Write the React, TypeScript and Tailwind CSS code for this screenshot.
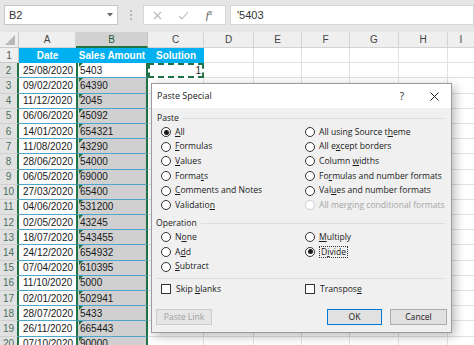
import React from "react";
import clsx from "clsx";

const data: [string, string][] = [
  ["25/08/2020", "5403"],
  ["09/02/2020", "64390"],
  ["11/12/2020", "2045"],
  ["06/06/2020", "45092"],
  ["14/01/2020", "654321"],
  ["11/08/2020", "43290"],
  ["28/06/2020", "54000"],
  ["06/05/2020", "69000"],
  ["27/03/2020", "65400"],
  ["04/06/2020", "531200"],
  ["02/05/2020", "43245"],
  ["18/07/2020", "543455"],
  ["24/12/2020", "654932"],
  ["07/04/2020", "610395"],
  ["11/10/2020", "5000"],
  ["02/01/2020", "502941"],
  ["28/07/2020", "5433"],
  ["26/11/2020", "665443"],
  ["07/10/2020", "90000"],
];

// columns D..I, plain gridline cells
function Blank() {
  return (
    <>
      <div className="w-[50px] shrink-0 border-r border-b border-[#e1e1e1]" />
      <div className="w-[48px] shrink-0 border-r border-b border-[#e1e1e1]" />
      <div className="w-[48px] shrink-0 border-r border-b border-[#e1e1e1]" />
      <div className="w-[49px] shrink-0 border-r border-b border-[#e1e1e1]" />
      <div className="w-[49px] shrink-0 border-r border-b border-[#e1e1e1]" />
      <div className="flex-1 border-b border-[#e1e1e1]" />
    </>
  );
}

function TextMark() {
  return (
    <svg className="absolute left-[1px] top-0" width="4" height="4" viewBox="0 0 4 4">
      <polygon points="0,0 4,0 0,4" fill="#1e7145" />
    </svg>
  );
}

function DataRow({ n, date, amount }: { n: number; date: string; amount: string }) {
  return (
    <div className="flex h-[15.2px]">
      <div className="w-[19px] shrink-0 flex items-center justify-center bg-[#e1e1e1] text-[#4a6f5b] border-r-2 border-r-[#217346] border-b border-b-[#d0d0d0]">
        {n}
      </div>
      <div className="w-[57px] shrink-0 bg-white border-b border-b-[#4ea6cf] pl-[4px] flex items-center">
        {date}
      </div>
      <div
        className={clsx(
          "w-[72px] shrink-0 relative border-x-2 border-x-[#217346] border-b border-b-[#4ea6cf] pl-[2px] flex items-center",
          n === 2 ? "bg-white" : "bg-[#d0d0d0]"
        )}
      >
        <TextMark />
        {amount}
      </div>
      {n === 2 ? (
        <div className="w-[56px] shrink-0 outline-2 outline-dashed outline-[#217346] -outline-offset-2 flex items-center justify-end pr-[3px]">
          1
        </div>
      ) : (
        <div className="w-[56px] shrink-0 border-r border-b border-[#e1e1e1]" />
      )}
      <Blank />
    </div>
  );
}

function Acc({ t, k }: { t: string; k?: number }) {
  if (k === undefined) return <span>{t}</span>;
  return (
    <span>
      {t.slice(0, k)}
      <u className="underline-offset-[1px]">{t[k]}</u>
      {t.slice(k + 1)}
    </span>
  );
}

function Radio({ label, k, on, off, focus }: { label: string; k?: number; on?: boolean; off?: boolean; focus?: boolean }) {
  return (
    <div className={clsx("h-[14.6px] flex items-center gap-[4px]", off && "text-[#a6a6a6]")}>
      <span
        className={clsx(
          "w-[10px] h-[10px] rounded-full border bg-white flex items-center justify-center shrink-0",
          off ? "border-[#cfcfcf]" : "border-[#333]"
        )}
      >
        {on && <span className="w-[5px] h-[5px] rounded-full bg-[#1a1a1a]" />}
      </span>
      <span className={clsx(focus && "border border-dotted border-[#333] px-[1px] leading-[10px]")}>
        <Acc t={label} k={k} />
      </span>
    </div>
  );
}

function Check({ label, k }: { label: string; k: number }) {
  return (
    <div className="h-[14px] flex items-center gap-[5px]">
      <span className="w-[10px] h-[10px] border border-[#333] bg-white shrink-0" />
      <Acc t={label} k={k} />
    </div>
  );
}

function PasteSpecial() {
  return (
    <div className="absolute left-[151px] top-[83px] w-[301px] h-[250px] bg-[#f0f0f0] border border-[#9b9b9b] shadow-[3px_3px_10px_rgba(0,0,0,0.28)] font-['Open_Sans',sans-serif] text-[8.6px] text-[#1a1a1a]">
      <div className="h-[24px] bg-white flex items-center pl-[5px] text-[9px]">
        Paste Special
        <span className="ml-auto w-[30px] text-center text-[10px]">?</span>
        <span className="w-[34px] flex justify-center">
          <svg width="9" height="9" viewBox="0 0 9 9">
            <path d="M0.5 0.5 L8.5 8.5 M8.5 0.5 L0.5 8.5" stroke="#222" strokeWidth="1" />
          </svg>
        </span>
      </div>

      <div className="px-[4px]">
        <div className="mt-[3px] h-[14px] flex items-center gap-[4px] pl-[1px] pr-[2px]">
          <span>Paste</span>
          <div className="flex-1 h-px bg-[#dcdcdc]" />
        </div>
        <div className="grid grid-cols-[144px_1fr] pl-[5px]">
          <Radio label="All" k={0} on />
          <Radio label="All using Source theme" k={18} />
          <Radio label="Formulas" k={0} />
          <Radio label="All except borders" k={5} />
          <Radio label="Values" k={0} />
          <Radio label="Column widths" k={7} />
          <Radio label="Formats" k={5} />
          <Radio label="Formulas and number formats" k={2} />
          <Radio label="Comments and Notes" k={0} />
          <Radio label="Values and number formats" k={3} />
          <Radio label="Validation" k={9} />
          <Radio label="All merging conditional formats" off />
        </div>

        <div className="mt-[3.5px] h-[14px] flex items-center gap-[4px] pr-[2px]">
          <span>Operation</span>
          <div className="flex-1 h-px bg-[#dcdcdc]" />
        </div>
        <div className="grid grid-cols-[144px_1fr] pl-[5px]">
          <Radio label="None" k={1} />
          <Radio label="Multiply" k={0} />
          <Radio label="Add" k={1} />
          <Radio label="Divide" k={1} on focus />
          <Radio label="Subtract" k={0} />
          <div />
        </div>

        <div className="mt-[4.5px] h-px bg-[#dcdcdc] mr-[2px]" />

        <div className="mt-[3px] grid grid-cols-[144px_1fr] pl-[5px]">
          <Check label="Skip blanks" k={5} />
          <Check label="Transpose" k={8} />
        </div>

        <div className="mt-[13px] flex items-center">
          <div className="w-[56px] h-[16px] border border-[#cccccc] bg-[#e6e6e6] text-[#a0a0a0] flex items-center justify-center">
            Paste Link
          </div>
          <div className="ml-auto w-[55px] h-[16px] border border-[#0078d7] bg-[#e1e1e1] flex items-center justify-center">
            OK
          </div>
          <div className="ml-[8px] w-[57px] h-[16px] border border-[#adadad] bg-[#e1e1e1] flex items-center justify-center">
            Cancel
          </div>
        </div>
      </div>
    </div>
  );
}

export default function App() {
  return (
    <div className="relative w-[474px] h-[345px] overflow-hidden bg-white font-['Liberation_Sans',Arial,sans-serif] text-[10px] text-[#1a1a1a]">
      {/* formula bar */}
      <div className="h-[32px] flex items-start pt-[5px] bg-[#e6e6e6]">
        <div className="ml-[4px] w-[114px] h-[20px] bg-white border border-[#c6c6c6] flex items-center justify-between pl-[4px] pr-[4px] text-[11px] text-[#333]">
          <span>B2</span>
          <svg width="6" height="4" viewBox="0 0 6 4">
            <polygon points="0,0 6,0 3,3.5" fill="#666" />
          </svg>
        </div>
        <div className="w-[25px] h-[20px] flex flex-col items-center justify-center gap-[2px]">
          <span className="w-[2px] h-[2px] bg-[#b5b5b5]" />
          <span className="w-[2px] h-[2px] bg-[#b5b5b5]" />
          <span className="w-[2px] h-[2px] bg-[#b5b5b5]" />
        </div>
        <div className="w-[83px] h-[20px] bg-white border border-[#d6d6d6] flex items-center">
          <span className="w-[26px] flex justify-center">
            <svg width="9" height="9" viewBox="0 0 9 9">
              <path d="M1 1 L8 8 M8 1 L1 8" stroke="#b8b8b8" strokeWidth="1.1" />
            </svg>
          </span>
          <span className="w-[26px] flex justify-center">
            <svg width="11" height="9" viewBox="0 0 11 9">
              <path d="M1 5 L4 8 L10 1" stroke="#b8b8b8" strokeWidth="1.1" fill="none" />
            </svg>
          </span>
          <span className="w-[26px] flex justify-center font-['Liberation_Serif',serif] italic text-[11px] text-[#555]">
            f<span className="text-[8px]">x</span>
          </span>
        </div>
        <div className="ml-[4px] flex-1 h-[20px] bg-white border border-[#d6d6d6] flex items-center pl-[6px] text-[11px] text-[#333]">
          '5403
        </div>
      </div>

      {/* column headers */}
      <div className="flex h-[16px] bg-[#efefef] text-[#444]">
        <div className="w-[19px] shrink-0 relative border-r border-b border-[#c8c8c8]">
          <svg className="absolute right-[3px] bottom-[2px]" width="10" height="10" viewBox="0 0 10 10">
            <polygon points="10,0 10,10 0,10" fill="#b8b8b8" />
          </svg>
        </div>
        <div className="w-[57px] shrink-0 flex items-center justify-center border-r border-b border-[#d4d4d4]">A</div>
        <div className="w-[72px] shrink-0 flex items-center justify-center bg-[#d2d2d2] text-[#1e5e3c] border-r border-r-[#c4c4c4] border-b-2 border-b-[#217346]">
          B
        </div>
        <div className="w-[56px] shrink-0 flex items-center justify-center border-r border-b border-[#d4d4d4]">C</div>
        <div className="w-[50px] shrink-0 flex items-center justify-center border-r border-b border-[#d4d4d4]">D</div>
        <div className="w-[48px] shrink-0 flex items-center justify-center border-r border-b border-[#d4d4d4]">E</div>
        <div className="w-[48px] shrink-0 flex items-center justify-center border-r border-b border-[#d4d4d4]">F</div>
        <div className="w-[49px] shrink-0 flex items-center justify-center border-r border-b border-[#d4d4d4]">G</div>
        <div className="w-[49px] shrink-0 flex items-center justify-center border-r border-b border-[#d4d4d4]">H</div>
        <div className="flex-1 flex items-center justify-center border-b border-[#d4d4d4]">I</div>
      </div>

      {/* row 1: table header */}
      <div className="flex h-[15.2px]">
        <div className="w-[19px] shrink-0 flex items-center justify-center bg-[#efefef] text-[#555] border-r border-b border-[#c8c8c8]">1</div>
        <div className="w-[57px] shrink-0 bg-[#00b0f0] text-white font-bold flex items-center justify-center">Date</div>
        <div className="w-[72px] shrink-0 bg-[#00b0f0] text-white font-bold flex items-center justify-center">Sales Amount</div>
        <div className="w-[56px] shrink-0 bg-[#00b0f0] text-white font-bold flex items-center justify-center">Solution</div>
        <Blank />
      </div>

      {data.map(([d, a], i) => (
        <DataRow key={i} n={i + 2} date={d} amount={a} />
      ))}

      <PasteSpecial />
    </div>
  );
}
